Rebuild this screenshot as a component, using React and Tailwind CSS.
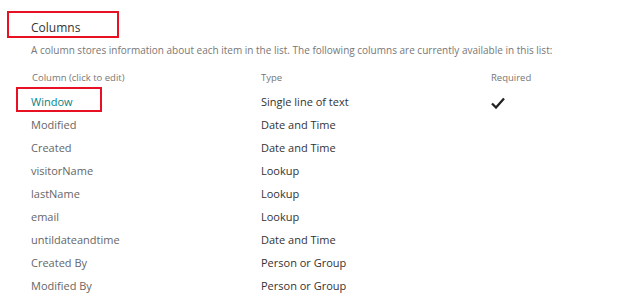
const rows = [
  { name: 'Window', type: 'Single line of text', required: true, link: true },
  { name: 'Modified', type: 'Date and Time' },
  { name: 'Created', type: 'Date and Time' },
  { name: 'visitorName', type: 'Lookup' },
  { name: 'lastName', type: 'Lookup' },
  { name: 'email', type: 'Lookup' },
  { name: 'untildateandtime', type: 'Date and Time' },
  { name: 'Created By', type: 'Person or Group' },
  { name: 'Modified By', type: 'Person or Group' },
];

function Check() {
  return (
    <svg width="14" height="12" viewBox="0 0 14 12" className="text-[#222]">
      <path d="M1 6.5 L5 10.5 L13 1.5" fill="none" stroke="currentColor" strokeWidth="2.3" />
    </svg>
  );
}

export default function App() {
  return (
    <div
      className="w-[639px] h-[299px] bg-white overflow-hidden"
      style={{ fontFamily: '"Open Sans", "Noto Sans", sans-serif' }}
    >
      <div className="pt-[11px] pl-[7px]">
        <div className="w-[112px] h-[27px] border-2 border-[#e81123] pl-[22px] pt-[7px]">
          <div className="text-[12px] leading-[16px] text-[#333]">Columns</div>
        </div>
      </div>

      <div className="pl-[31px] mt-[4px] text-[10px] text-[#777] h-[16px] leading-[16px]">
        A column stores information about each item in the list. The following columns are currently available in this list:
      </div>

      <div className="pl-[31px] mt-[12px]">
        <div className="grid grid-cols-[230px_230px_1fr] h-[16px] leading-[16px] text-[9.5px] text-[#777]">
          <div className="pl-[1px]">Column (click to edit)</div>
          <div>Type</div>
          <div>Required</div>
        </div>

        <div className="mt-[5px]">
          {rows.map((r) => (
            <div
              key={r.name}
              className="grid grid-cols-[230px_230px_1fr] h-[23px] items-center text-[11px]"
            >
              <div className="relative h-full flex items-center">
                {r.link ? (
                  <>
                    <span className="text-[#038387]">Window</span>
                    <span className="absolute left-[-15px] top-[-4px] w-[86px] h-[25px] border-2 border-[#e81123]" />
                  </>
                ) : (
                  <span className="text-[#666]">{r.name}</span>
                )}
              </div>
              <div className="text-[#333]">{r.type}</div>
              <div>{r.required && <Check />}</div>
            </div>
          ))}
        </div>
      </div>
    </div>
  );
}
